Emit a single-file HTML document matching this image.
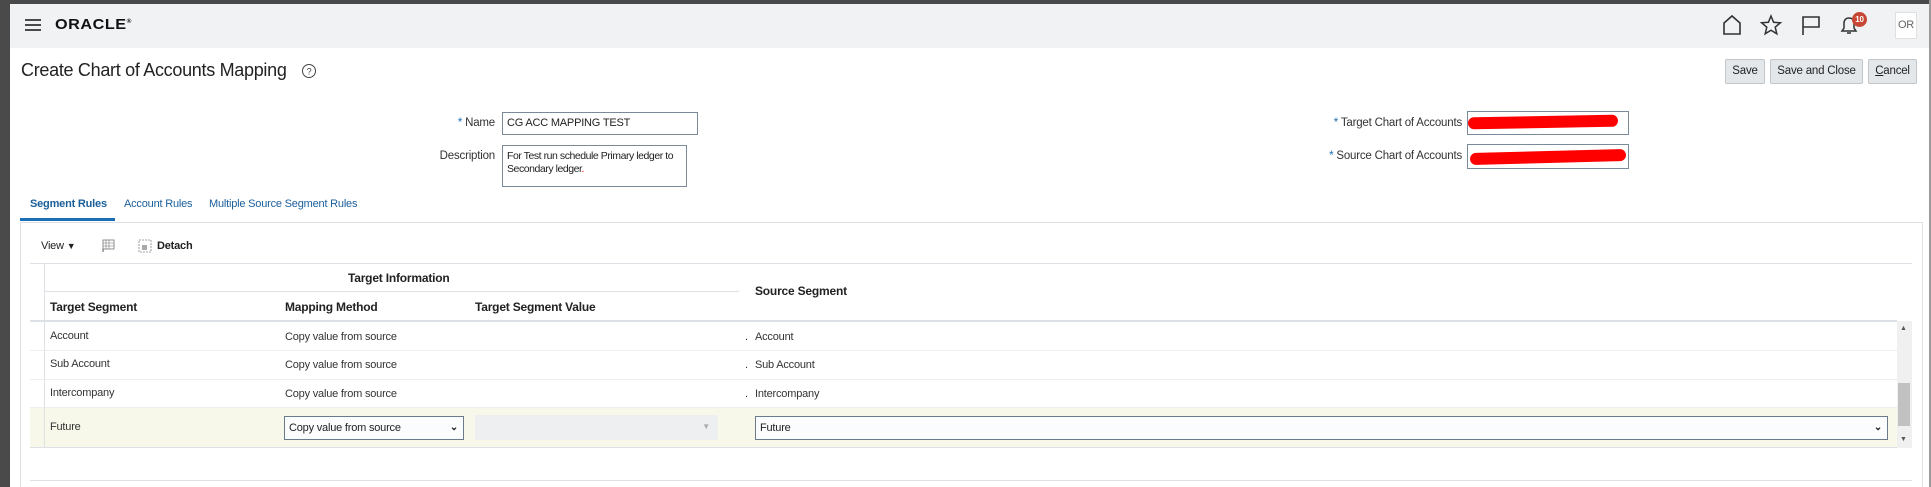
<!DOCTYPE html>
<html><head><meta charset="utf-8"><style>
*{box-sizing:border-box;margin:0;padding:0}
body{width:1931px;height:487px;overflow:hidden;background:#fff;font-family:"Liberation Sans",Arial,sans-serif;color:#333;position:relative;font-size:11px;letter-spacing:-0.2px}
.a{position:absolute;white-space:nowrap}
.hdr{left:0;top:0;width:1931px;height:48px;background:#f1f2f4;border-top:4px solid #4a4a4a}
.lbl{font-size:11.5px;color:#333;text-align:right}
.req{color:#1a6eb5}
.inp{border:1px solid #7b8a99;background:#fff;font-size:11px;padding:0 4px;line-height:21px;color:#222}
.btn{border:1px solid #c3c6c9;background:#e4e7ea;border-radius:2px;font-size:11.5px;color:#222;text-align:center;line-height:23px}
.hl{height:1px;background:#dde1e6}
.th{font-weight:bold;font-size:12px;color:#222}
.td{font-size:11px;color:#333}
.sel{border:1px solid #6a7c8c;background:#fbfcfd;font-size:11px;padding:0 4px;line-height:22px;color:#222}
</style></head><body>
<div class="a" style="left:0;top:0;width:10px;height:487px;background:#4a4a4a;z-index:5"></div>
<div class="a" style="right:0;top:0;width:2px;height:487px;background:#9a9a9a;z-index:5"></div>
<div class="a hdr"></div>
<svg class="a" style="left:24px;top:18px" width="18" height="14"><path d="M1 2H17M1 7H17M1 12H17" stroke="#333" stroke-width="1.8"/></svg>
<div class="a" style="left:55px;top:16px;font-size:15px;font-weight:bold;letter-spacing:0.5px;color:#111;transform:scaleX(1.08);transform-origin:left">ORACLE<sup style="font-size:6px">®</sup></div>
<svg class="a" style="left:1721px;top:14px" width="22" height="22"><path d="M3 20V9L11 2L19 9V20Z" fill="none" stroke="#333" stroke-width="1.6"/></svg>
<svg class="a" style="left:1760px;top:14px" width="22" height="22"><path d="M11 2L13.6 8.3L20.3 8.8L15.2 13.2L16.8 19.8L11 16.2L5.2 19.8L6.8 13.2L1.7 8.8L8.4 8.3Z" fill="none" stroke="#333" stroke-width="1.5"/></svg>
<svg class="a" style="left:1800px;top:14px" width="22" height="22"><path d="M3 21V3H19V13H3" fill="none" stroke="#333" stroke-width="1.6"/></svg>
<svg class="a" style="left:1838px;top:14px" width="22" height="24"><path d="M4 17H18L16 14V9C16 6 14 4 11 4C8 4 6 6 6 9V14Z" fill="none" stroke="#333" stroke-width="1.5"/><path d="M9 19H13" stroke="#333" stroke-width="1.5"/></svg>
<div class="a" style="left:1852px;top:12px;width:15px;height:15px;border-radius:8px;background:#c74634;color:#fff;font-size:8px;line-height:15px;text-align:center;font-weight:bold">10</div>
<div class="a" style="left:1895px;top:12px;width:22px;height:27px;background:#fff;border:1px solid #e0e0e0;font-size:11px;color:#666;text-align:center;line-height:25px">OR</div>

<div class="a" style="left:21px;top:60px;font-size:18px;color:#222;letter-spacing:-0.3px">Create Chart of Accounts Mapping</div>
<svg class="a" style="left:301px;top:63px" width="16" height="16"><circle cx="8" cy="8" r="6.5" fill="none" stroke="#444" stroke-width="1"/><text x="8" y="11.5" font-size="9" text-anchor="middle" fill="#444" font-family="Liberation Sans">?</text></svg>

<div class="a btn" style="left:1725px;top:59px;width:40px;height:25px">Save</div>
<div class="a btn" style="left:1770px;top:59px;width:93px;height:25px">Save and Close</div>
<div class="a btn" style="left:1868px;top:59px;width:49px;height:25px"><u>C</u>ancel</div>

<div class="a lbl" style="left:395px;top:117px;width:100px"><span class="req">*</span> Name</div>
<div class="a inp" style="left:502px;top:112px;width:196px;height:23px">CG ACC MAPPING TEST</div>
<div class="a lbl" style="left:395px;top:150px;width:100px">Description</div>
<div class="a inp" style="left:502px;top:145px;width:185px;height:42px;white-space:normal;line-height:13px;padding-top:4px;font-size:10.5px;letter-spacing:-0.45px">For Test run schedule Primary ledger to Secondary ledger<span style="color:red">.</span></div>

<div class="a lbl" style="left:1262px;top:117px;width:200px"><span class="req">*</span> Target Chart of Accounts</div>
<div class="a inp" style="left:1467px;top:111px;width:162px;height:24px"></div>
<div class="a" style="left:1468px;top:116px;width:150px;height:12px;background:#f00;border-radius:6px;transform:rotate(-1deg)"></div>
<div class="a lbl" style="left:1262px;top:150px;width:200px"><span class="req">*</span> Source Chart of Accounts</div>
<div class="a inp" style="left:1467px;top:144px;width:162px;height:25px"></div>
<div class="a" style="left:1470px;top:151px;width:156px;height:12px;background:#f00;border-radius:6px;transform:rotate(-1.5deg)"></div>

<div class="a" style="left:30px;top:198px;font-size:11px;color:#1a5e9a;font-weight:bold">Segment Rules</div>
<div class="a" style="left:124px;top:198px;font-size:11px;color:#1a5e9a">Account Rules</div>
<div class="a" style="left:209px;top:198px;font-size:11px;color:#1a5e9a">Multiple Source Segment Rules</div>
<div class="a" style="left:20px;top:218px;width:95px;height:3px;background:#1a6eb5"></div>
<div class="a" style="left:20px;top:222px;width:1903px;height:265px;border:1px solid #dde1e6;border-bottom:none"></div>

<div class="a" style="left:41px;top:240px;font-size:11px;color:#222">View <span style="font-size:9px">▼</span></div>
<svg class="a" style="left:101px;top:239px" width="14" height="14"><rect x="2" y="1" width="11" height="9" fill="none" stroke="#777" stroke-width="0.8"/><path d="M2 4H13M2 7H13M5 1V10M8 1V10" stroke="#777" stroke-width="0.6"/><path d="M2 10V13" stroke="#555"/></svg>
<svg class="a" style="left:138px;top:239px" width="14" height="14"><rect x="1" y="1" width="12" height="12" fill="none" stroke="#888" stroke-dasharray="2 1" stroke-width="0.8"/><rect x="4" y="6" width="5" height="5" fill="#aaa"/></svg>
<div class="a" style="left:157px;top:240px;font-size:11px;font-weight:bold;color:#222">Detach</div>

<div class="a hl" style="left:30px;top:263px;width:1882px"></div>
<div class="a" style="left:44px;top:263px;width:1px;height:185px;background:#dde1e6"></div>
<div class="a th" style="left:348px;top:271px">Target Information</div>
<div class="a hl" style="left:44px;top:291px;width:695px"></div>
<div class="a th" style="left:755px;top:284px">Source Segment</div>
<div class="a th" style="left:50px;top:300px">Target Segment</div>
<div class="a th" style="left:285px;top:300px">Mapping Method</div>
<div class="a th" style="left:475px;top:300px">Target Segment Value</div>
<div class="a" style="left:30px;top:320px;width:1867px;height:2px;background:#dde1e6"></div>

<div class="a td" style="left:50px;top:330px">Account</div>
<div class="a td" style="left:285px;top:331px">Copy value from source</div>
<div class="a td" style="left:745px;top:331px">.</div>
<div class="a td" style="left:755px;top:331px">Account</div>
<div class="a" style="left:30px;top:350px;width:1867px;height:1px;background:#eceef0"></div>
<div class="a td" style="left:50px;top:358px">Sub Account</div>
<div class="a td" style="left:285px;top:359px">Copy value from source</div>
<div class="a td" style="left:745px;top:359px">.</div>
<div class="a td" style="left:755px;top:359px">Sub Account</div>
<div class="a" style="left:30px;top:379px;width:1867px;height:1px;background:#eceef0"></div>
<div class="a td" style="left:50px;top:387px">Intercompany</div>
<div class="a td" style="left:285px;top:388px">Copy value from source</div>
<div class="a td" style="left:745px;top:388px">.</div>
<div class="a td" style="left:755px;top:388px">Intercompany</div>
<div class="a" style="left:30px;top:407px;width:1867px;height:41px;background:#f7f8ea;border-top:1px solid #eceef0;border-bottom:1px solid #dde1e6"></div>
<div class="a td" style="left:50px;top:421px">Future</div>
<div class="a sel" style="left:284px;top:416px;width:180px;height:24px">Copy value from source<span style="position:absolute;right:5px;top:0;font-size:10px;font-weight:bold">⌄</span></div>
<div class="a" style="left:475px;top:415px;width:243px;height:25px;background:#eeeff1"><span style="position:absolute;right:8px;top:7px;font-size:8px;color:#aaa">▼</span></div>
<div class="a sel" style="left:755px;top:416px;width:1133px;height:24px">Future<span style="position:absolute;right:5px;top:0;font-size:10px;font-weight:bold">⌄</span></div>
<div class="a" style="left:44px;top:407px;width:1px;height:41px;background:#dde1e6"></div>

<div class="a" style="left:1897px;top:321px;width:15px;height:127px;background:#f0f0f0"></div>
<div class="a" style="left:1898px;top:383px;width:12px;height:43px;background:#c1c1c1"></div>
<div class="a" style="left:1900px;top:325px;font-size:7px;color:#555">▲</div>
<div class="a" style="left:1900px;top:436px;font-size:7px;color:#555">▼</div>
<div class="a hl" style="left:30px;top:480px;width:1882px"></div>
</body></html>
